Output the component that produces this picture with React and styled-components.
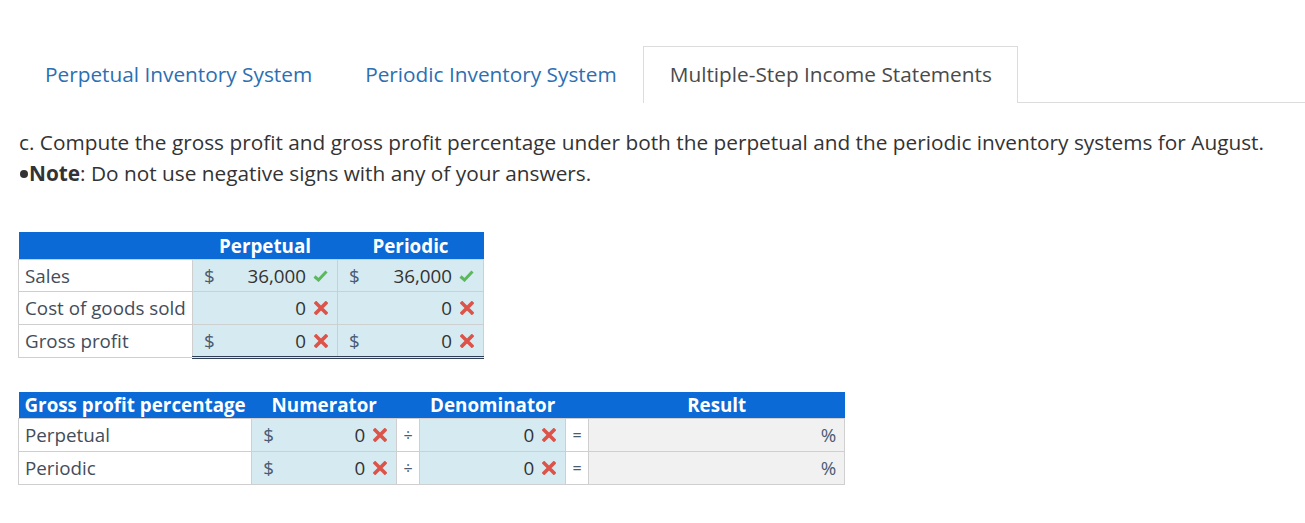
import React from "react";
import styled, { createGlobalStyle } from "styled-components";

const Global = createGlobalStyle`
  body {
    margin: 0;
    background: #fff;
    font-family: "Open Sans", "Liberation Sans", sans-serif;
  }
`;

const Page = styled.div`
  padding: 46px 0 0 18px;
`;

const TabBar = styled.div`
  display: flex;
  border-bottom: 1px solid #dcdcdc;
`;

const Tab = styled.div`
  box-sizing: border-box;
  height: 57px;
  padding: 0 25px 2px 26px;
  display: flex;
  align-items: center;
  font-size: 20.8px;
  color: ${(p) => (p.active ? "#4a4a4a" : "#2c6fb2")};
  border: 1px solid ${(p) => (p.active ? "#dcdcdc" : "transparent")};
  border-bottom: none;
  background: #fff;
  margin-bottom: -1px;
`;

const Question = styled.div`
  margin-top: 24px;
  font-size: 20.8px;
  line-height: 31px;
  color: #333;
  padding-left: 1px;
`;

const Bullet = styled.span`
  display: inline-block;
  width: 8px;
  height: 8px;
  border-radius: 50%;
  background: #333;
  margin: 0 1px 3px 1px;
  vertical-align: middle;
`;

const Table = styled.table`
  border-collapse: collapse;
  margin-top: ${(p) => p.top}px;
  font-size: 18.8px;
  color: #434d5b;
`;

const HeadCell = styled.th`
  background: #0b6ad6;
  color: #fff;
  font-weight: 700;
  height: ${(p) => p.h || 26}px;
  padding: 0 6px;
  text-align: ${(p) => p.align || "center"};
  line-height: 26px;
  white-space: nowrap;
`;

const LabelCell = styled.td`
  border: 1px solid #cfcfcf;
  padding: 0 6px;
  height: ${(p) => p.h || 31}px;
  width: ${(p) => p.w}px;
  white-space: nowrap;
  background: #fff;
`;

const ValueCell = styled.td`
  background: #d6eaf1;
  border: 1px solid #cfcfcf;
  border-top: ${(p) => (p.total ? "1px solid #111" : "1px solid #cfcfcf")};
  border-bottom: ${(p) => (p.total ? "3px double #2e3f57" : "1px solid #cfcfcf")};
  padding: 0;
  width: ${(p) => p.w}px;
`;

const ValueInner = styled.div`
  display: flex;
  align-items: center;
  padding: 0 9px 0 11px;
`;

const Dollar = styled.span`
  color: #4a5b72;
  width: 12px;
`;

const Amount = styled.span`
  flex: 1;
  text-align: right;
  color: #333;
`;

const Mark = styled.span`
  width: 15px;
  margin-left: 7px;
  display: flex;
  align-items: center;
  justify-content: center;
`;

const OpCell = styled.td`
  border: 1px solid #cfcfcf;
  width: 22px;
  text-align: center;
  color: #4a5b72;
  font-size: 16px;
  padding: 0;
  background: #fff;
`;

const ResultCell = styled.td`
  background: #f1f1f1;
  border: 1px solid #cfcfcf;
  width: ${(p) => p.w}px;
  text-align: right;
  padding: 0 8px;
  color: #4a5b72;
`;

const Check = () => (
  <svg width="15" height="12" viewBox="0 0 15 12">
    <path d="M1.5 6.5 L5.5 10 L13.5 1.5" fill="none" stroke="#5cb85c" strokeWidth="3" />
  </svg>
);

const Cross = () => (
  <svg width="14" height="14" viewBox="0 0 14 14">
    <path d="M2.2 2.2 L11.8 11.8 M11.8 2.2 L2.2 11.8" fill="none" stroke="#dc5349" strokeWidth="3.6" strokeLinecap="square" />
  </svg>
);

const Value = ({ dollar, amount, ok }) => (
  <ValueInner>
    <Dollar>{dollar ? "$" : ""}</Dollar>
    <Amount>{amount}</Amount>
    <Mark>{ok ? <Check /> : <Cross />}</Mark>
  </ValueInner>
);

const incomeRows = [
  { label: "Sales", dollar: true, a: "36,000", b: "36,000", ok: true, h: 31 },
  { label: "Cost of goods sold", dollar: false, a: "0", b: "0", ok: false, h: 32 },
  { label: "Gross profit", dollar: true, a: "0", b: "0", ok: false, total: true, h: 32 },
];

const App = () => {
  return (
    <Page>
      <Global />
      <TabBar>
        <Tab>Perpetual Inventory System</Tab>
        <Tab>Periodic Inventory System</Tab>
        <Tab active>Multiple-Step Income Statements</Tab>
      </TabBar>
      <Question>
        c. Compute the gross profit and gross profit percentage under both the perpetual and the periodic inventory systems for August.
        <br />
        <Bullet />
        <b>Note</b>: Do not use negative signs with any of your answers.
      </Question>

      <Table top={43}>
        <thead>
          <tr>
            <HeadCell h={27} />
            <HeadCell h={27}>Perpetual</HeadCell>
            <HeadCell h={27}>Periodic</HeadCell>
          </tr>
        </thead>
        <tbody>
          {incomeRows.map((r) => (
            <tr key={r.label}>
              <LabelCell w={161} h={r.h}>{r.label}</LabelCell>
              <ValueCell w={144} total={r.total}>
                <Value dollar={r.dollar} amount={r.a} ok={r.ok} />
              </ValueCell>
              <ValueCell w={145} total={r.total}>
                <Value dollar={r.dollar} amount={r.b} ok={r.ok} />
              </ValueCell>
            </tr>
          ))}
        </tbody>
      </Table>

      <Table top={33}>
        <thead>
          <tr>
            <HeadCell align="left">Gross profit percentage</HeadCell>
            <HeadCell>Numerator</HeadCell>
            <HeadCell />
            <HeadCell>Denominator</HeadCell>
            <HeadCell />
            <HeadCell>Result</HeadCell>
          </tr>
        </thead>
        <tbody>
          {["Perpetual", "Periodic"].map((label) => (
            <tr key={label}>
              <LabelCell w={220} h={32}>{label}</LabelCell>
              <ValueCell w={144}>
                <Value dollar amount="0" />
              </ValueCell>
              <OpCell>÷</OpCell>
              <ValueCell w={145}>
                <Value amount="0" />
              </ValueCell>
              <OpCell>=</OpCell>
              <ResultCell w={239}>%</ResultCell>
            </tr>
          ))}
        </tbody>
      </Table>
    </Page>
  );
};

export default App;
